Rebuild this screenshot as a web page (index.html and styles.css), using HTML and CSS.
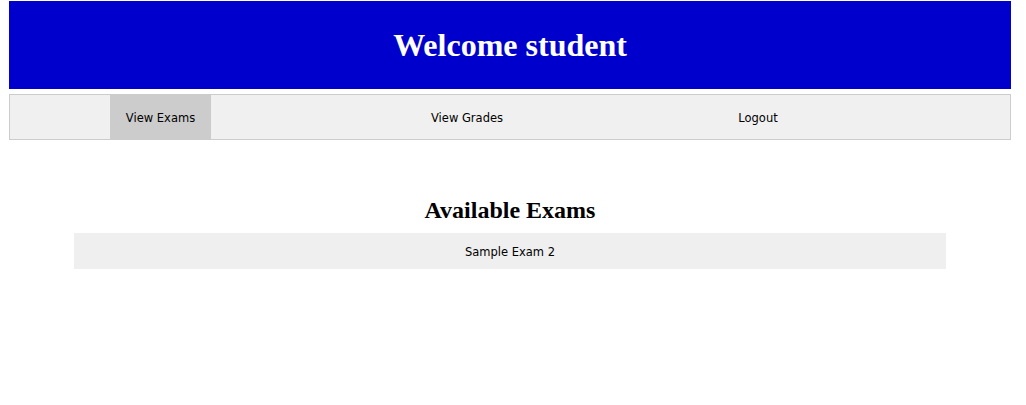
FILE: index.html
```html
<!DOCTYPE html>
<html>
<head>
<meta charset="utf-8">
<title>Student</title>
<link rel="stylesheet" href="styles.css">
</head>
<body>
<div class="page">
  <header class="banner">
    <h1 class="banner-title">Welcome student</h1>
  </header>
  <nav class="menu">
    <a class="menu-item menu-item-exams active" href="#">View Exams</a>
    <a class="menu-item menu-item-grades" href="#">View Grades</a>
    <a class="menu-item menu-item-logout" href="#">Logout</a>
  </nav>
  <main class="content">
    <h2 class="section-title">Available Exams</h2>
    <ul class="exam-list">
      <li class="exam-row">Sample Exam 2</li>
    </ul>
  </main>
</div>
</body>
</html>
```

FILE: styles.css
```css
html, body {
  margin: 0;
  padding: 0;
  background: #ffffff;
}

.page {
  width: 1002px;
  margin-left: 9px;
  padding-top: 1px;
}

.banner {
  height: 88px;
  background: #0000cc;
  display: flex;
  align-items: center;
  justify-content: center;
}

.banner-title {
  margin: 0;
  color: #ffffff;
  font-family: "Liberation Serif", "Times New Roman", serif;
  font-size: 32px;
  font-weight: bold;
  line-height: 1;
}

.menu {
  margin-top: 5px;
  height: 44px;
  border: 1px solid #cccccc;
  background: #f0f0f0;
  display: flex;
  padding-left: 100px;
}

.menu-item {
  display: flex;
  align-items: center;
  justify-content: center;
  padding-top: 2px;
  color: #000000;
  text-decoration: none;
  font-family: "DejaVu Sans", Tahoma, sans-serif;
  font-size: 11.5px;
}

.menu-item.active {
  background: #cccccc;
}

.menu-item-exams { width: 101px; }
.menu-item-grades { width: 512px; }
.menu-item-logout { width: 70px; }

.content {
  padding-top: 56px;
}

.section-title {
  margin: 0 0 9px 0;
  text-align: center;
  font-family: "Liberation Serif", "Times New Roman", serif;
  font-size: 24px;
  font-weight: bold;
  line-height: 28px;
}

.exam-list {
  list-style: none;
  margin: 0 65px;
  padding: 0;
}

.exam-row {
  height: 36px;
  padding-top: 1px;
  box-sizing: border-box;
  background: #efefef;
  display: flex;
  align-items: center;
  justify-content: center;
  font-family: "DejaVu Sans", Tahoma, sans-serif;
  font-size: 11.5px;
}
```
